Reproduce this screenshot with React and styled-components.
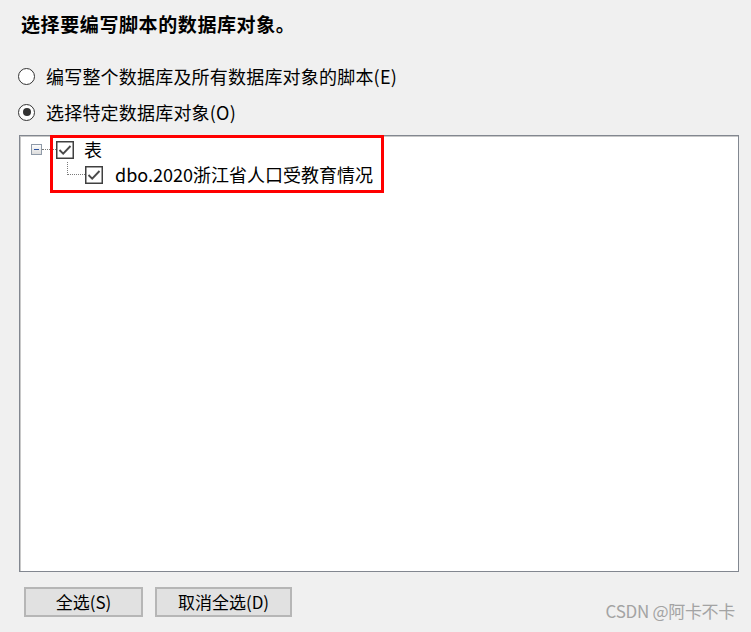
import React from 'react';
import styled, { createGlobalStyle } from 'styled-components';

const GlobalStyle = createGlobalStyle`
	html, body {
		margin: 0;
		padding: 0;
		background: #f0f0f0;
	}
	body {
		font-family: "Noto Sans CJK SC", "Noto Sans", sans-serif;
		color: #000;
	}
`;

const Page = styled.div`
	position: relative;
	box-sizing: border-box;
	width: 751px;
	height: 632px;
	padding: 12px 12px 0 18px;
	overflow: hidden;
`;

const Title = styled.div`
	height: 24px;
	line-height: 24px;
	padding-left: 3px;
	font-size: 19px;
	font-weight: 700;
	letter-spacing: 0.6px;
`;

const RadioGroup = styled.div`
	margin-top: 22px;
	display: flex;
	flex-direction: column;
`;

const RadioRow = styled.label`
	display: flex;
	align-items: center;
	height: 36px;
	font-size: 18px;
	line-height: 36px;
	gap: 11px;
	letter-spacing: 0.2px;
`;

const RadioDot = styled.span`
	flex: none;
	box-sizing: border-box;
	width: 17px;
	height: 17px;
	border-radius: 50%;
	border: 1.5px solid #333;
	background: #fff;
	display: flex;
	align-items: center;
	justify-content: center;
	&::after {
		content: '';
		width: 8px;
		height: 8px;
		border-radius: 50%;
		background: ${p => (p.$checked ? '#333' : 'transparent')};
	}
`;

const TreeBox = styled.div`
	position: relative;
	box-sizing: border-box;
	margin: 5px 0 0 1px;
	width: 720px;
	height: 437px;
	background: #fff;
	border: 1px solid #828790;
	box-shadow: inset 1px 1px 0 #c8c8c8;
	padding-top: 1px;
`;

const TreeRow = styled.div`
	display: flex;
	align-items: center;
	height: 25px;
	padding-left: ${p => p.$indent}px;
	font-size: 18px;
	line-height: 25px;
	white-space: nowrap;
`;

const Expander = styled.span`
	flex: none;
	box-sizing: border-box;
	width: 11px;
	height: 11px;
	border: 1px solid #8f9aa8;
	background: linear-gradient(#fdfdfd, #dcdcdc);
	display: flex;
	align-items: center;
	justify-content: center;
	&::after {
		content: '';
		width: 5px;
		height: 1.5px;
		background: #2b52a0;
	}
`;

const HLine = styled.span`
	flex: none;
	width: 14px;
	border-top: 1px dotted #7a7a7a;
`;

const Elbow = styled.span`
	flex: none;
	align-self: flex-start;
	box-sizing: border-box;
	width: 18px;
	height: 13px;
	border-left: 1px dotted #7a7a7a;
	border-bottom: 1px dotted #7a7a7a;
`;

const Box = styled.svg`
	flex: none;
	display: block;
`;

const Label = styled.span`
	margin-left: ${p => p.$gap}px;
`;

const Highlight = styled.div`
	position: absolute;
	left: 30px;
	top: -1px;
	width: 334px;
	height: 58px;
	box-sizing: border-box;
	border: 3px solid #f00;
	pointer-events: none;
`;

const ButtonBar = styled.div`
	display: flex;
	gap: 12px;
	margin-top: 15px;
	padding-left: 6px;
`;

const Button = styled.button`
	box-sizing: border-box;
	width: ${p => p.$w}px;
	height: 30px;
	padding: 0;
	background: #e1e1e1;
	border: 2px solid #b6b6b6;
	font-family: inherit;
	font-size: 17px;
	line-height: 26px;
	color: #000;
`;

const Watermark = styled.div`
	position: absolute;
	right: 16px;
	bottom: 10px;
	font-size: 17px;
	line-height: 22px;
	color: #a3a3a3;
	letter-spacing: -0.3px;
`;

function Checkbox() {
	return (
		<Box width="18" height="18" viewBox="0 0 18 18">
			<rect x="0.75" y="0.75" width="16.5" height="16.5" fill="#fff" stroke="#404040" strokeWidth="1.5" />
			<polyline points="3.5,9 7.2,12.6 14.5,5" fill="none" stroke="#4a4a4a" strokeWidth="1.9" />
		</Box>
	);
}

export default function App() {
	return (
		<Page>
			<GlobalStyle />
			<Title>选择要编写脚本的数据库对象。</Title>
			<RadioGroup>
				<RadioRow>
					<RadioDot />
					<span>编写整个数据库及所有数据库对象的脚本(E)</span>
				</RadioRow>
				<RadioRow>
					<RadioDot $checked />
					<span>选择特定数据库对象(O)</span>
				</RadioRow>
			</RadioGroup>
			<TreeBox>
				<TreeRow $indent={11}>
					<Expander />
					<HLine />
					<Checkbox />
					<Label $gap={10}>表</Label>
				</TreeRow>
				<TreeRow $indent={47}>
					<Elbow />
					<Checkbox />
					<Label $gap={12}>dbo.2020浙江省人口受教育情况</Label>
				</TreeRow>
				<Highlight />
			</TreeBox>
			<ButtonBar>
				<Button $w={119}>全选(S)</Button>
				<Button $w={137}>取消全选(D)</Button>
			</ButtonBar>
			<Watermark>CSDN @阿卡不卡</Watermark>
		</Page>
	);
}
